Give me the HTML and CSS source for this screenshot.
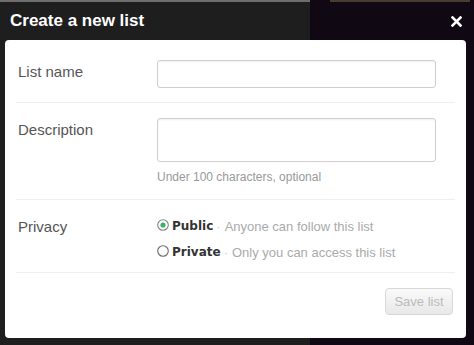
FILE: index.html
```html
<!DOCTYPE html>
<html>
<head>
<meta charset="UTF-8">
<title>Create a new list</title>
<link rel="stylesheet" href="styles.css">
</head>
<body>
	<div id="dialog">
		<div class="header">
			<div class="title">Create a new list</div>
			<a class="close">
				<svg width="11" height="11" viewBox="0 0 11 11">
					<path d="M1.5 1.5 L9.5 9.5 M9.5 1.5 L1.5 9.5" stroke="#fff" stroke-width="2.6" stroke-linecap="square"/>
				</svg>
			</a>
		</div>
		<div class="panel">
			<div class="row">
				<div class="label">List name</div>
				<div class="field">
					<input class="input" type="text">
				</div>
			</div>
			<div class="row">
				<div class="label">Description</div>
				<div class="field">
					<textarea class="input area"></textarea>
					<div class="help">Under 100 characters, optional</div>
				</div>
			</div>
			<div class="row privacy">
				<div class="label">Privacy</div>
				<div class="field radios">
					<div class="radio">
						<svg class="dot" width="12" height="12" viewBox="0 0 12 12">
							<circle cx="6" cy="6" r="5.3" fill="#fff" stroke="#7a8a80" stroke-width="1.1"/>
							<circle cx="6" cy="6" r="2.6" fill="#3fae6a"/>
						</svg>
						<b>Public</b><span class="sep">&middot;</span><span class="note">Anyone can follow this list</span>
					</div>
					<div class="radio">
						<svg class="dot" width="12" height="12" viewBox="0 0 12 12">
							<circle cx="6" cy="6" r="5.3" fill="#fff" stroke="#6a6a6a" stroke-width="1.1"/>
						</svg>
						<b>Private</b><span class="sep">&middot;</span><span class="note">Only you can access this list</span>
					</div>
				</div>
			</div>
			<div class="footer">
				<a class="button">Save list</a>
			</div>
		</div>
	</div>
</body>
</html>
```

FILE: styles.css
```css
body {
	margin: 0;
	height: 345px;
	overflow: hidden;
	font-family: "Liberation Sans", Arial, sans-serif;
	background:
		linear-gradient(#6e6e6e, #6e6e6e) 0 0 / 310px 2px no-repeat,
		linear-gradient(#4a3a30, #4a3a30) 330px 0 / 140px 2px no-repeat,
		linear-gradient(to right, #1e1e1e 310px, #100812 310px);
}
#dialog {
	width: 474px;
}
.header {
	height: 40px;
	display: flex;
	align-items: center;
	justify-content: space-between;
	padding: 0 12px 0 10px;
	box-sizing: border-box;
}
.title {
	color: #fff;
	font-size: 17px;
	font-weight: bold;
	margin-top: 2px;
}
.close {
	display: block;
	width: 11px;
	height: 11px;
	margin-top: 2px;
	cursor: pointer;
}
.close svg {
	display: block;
}
.panel {
	margin: 0 8px 0 5px;
	height: 298px;
	background: #fff;
	border-radius: 4px;
	padding: 5px 11px 0;
	box-sizing: border-box;
}
.row {
	display: flex;
	padding: 15px 0 14px;
	border-bottom: 1px solid #eeeeee;
}
.row.privacy {
	padding-bottom: 11px;
}
.label {
	width: 139px;
	padding: 2px 0 0 2px;
	font-size: 15px;
	line-height: 20px;
	color: #555;
}
.field {
	flex: 1;
	padding-right: 19px;
}
.field.radios {
	padding-top: 2px;
}
.input {
	display: block;
	width: 100%;
	height: 28px;
	margin: 0;
	box-sizing: border-box;
	border: 1px solid #cfcfcf;
	border-radius: 3px;
	background: #fff;
	box-shadow: inset 0 1px 2px rgba(0,0,0,.06);
	font-family: inherit;
}
.input.area {
	height: 44px;
	resize: none;
}
.help {
	margin-top: 7px;
	font-size: 12px;
	line-height: 16px;
	color: #999;
}
.radio {
	display: flex;
	align-items: center;
	height: 18px;
	font-size: 13px;
	margin-bottom: 8px;
}
.radio:last-child {
	margin-bottom: 0;
}
.radio .dot {
	display: block;
	margin-right: 3px;
	margin-top: -3px;
}
.radio b {
	font-family: "DejaVu Sans", Verdana, sans-serif;
	font-size: 12px;
	color: #333;
}
.sep {
	color: #ccc;
	margin: 0 4px 0 3px;
}
.note {
	color: #aaa;
}
.footer {
	display: flex;
	justify-content: flex-end;
	padding: 15px 2px 0 0;
}
.button {
	display: block;
	width: 68px;
	height: 27px;
	box-sizing: border-box;
	border: 1px solid #d8d8d8;
	border-radius: 4px;
	background: linear-gradient(#fafafa, #e8e8e8);
	color: #bbb;
	font-size: 13px;
	line-height: 25px;
	text-align: center;
	cursor: pointer;
}
```
